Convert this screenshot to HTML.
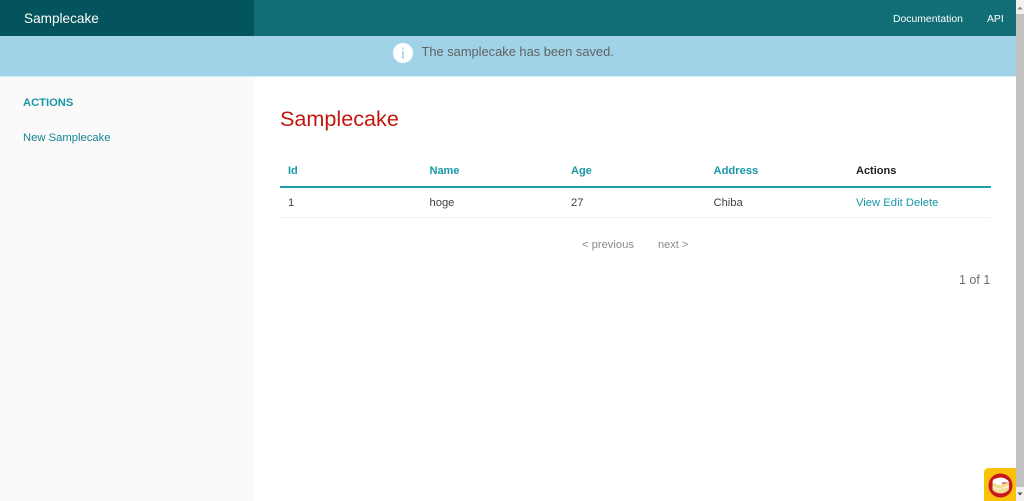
<!DOCTYPE html>
<html>
<head>
<meta charset="utf-8">
<style>
html,body{margin:0;padding:0;width:1024px;height:501px;overflow:hidden;background:#fff;font-family:"Liberation Sans",sans-serif}
.a{position:absolute;white-space:nowrap;line-height:1;filter:blur(.25px)}
.b{position:absolute}
</style>
</head>
<body>
<div class="b" style="left:0;top:0;width:1016px;height:36px;background:#116d76"></div>
<div class="b" style="left:0;top:0;width:254px;height:36px;background:#03545c"></div>
<div class="a" style="left:24px;top:12px;font-size:13.6px;color:#fff">Samplecake</div>
<div class="a" style="left:893px;top:14.5px;font-size:10.4px;color:#fff">Documentation</div>
<div class="a" style="left:987px;top:14.5px;font-size:10.4px;color:#fff">API</div>

<div class="b" style="left:0;top:36px;width:1016px;height:40px;background:#a0d3e8"></div>
<div class="b" style="left:0;top:76px;width:1016px;height:1px;background:#d4ecf5"></div>
<svg class="b" style="left:393px;top:43px" width="20" height="20" viewBox="0 0 20 20">
<circle cx="10" cy="10" r="10" fill="#fff"/>
<rect x="9.2" y="4.5" width="1.6" height="1.8" fill="#a0d3e8"/>
<rect x="9.2" y="8" width="1.6" height="8" fill="#a0d3e8"/>
</svg>
<div class="a" style="left:421.5px;top:46px;font-size:12.87px;color:#626262">The samplecake has been saved.</div>

<div class="b" style="left:0;top:77px;width:254px;height:424px;background:#fafafa"></div>
<div class="a" style="left:23px;top:97.500px;font-size:11.2px;font-weight:bold;color:#1798a5">ACTIONS</div>
<div class="a" style="left:23px;top:132.500px;font-size:11.25px;color:#15848f">New Samplecake</div>

<div class="a" style="left:280px;top:108px;font-size:21.6px;color:#c3170d">Samplecake</div>

<div class="a" style="left:288px;top:166px;font-size:11px;font-weight:bold;color:#1798a5">Id</div>
<div class="a" style="left:429.5px;top:166px;font-size:11px;font-weight:bold;color:#1798a5">Name</div>
<div class="a" style="left:571px;top:166px;font-size:11px;font-weight:bold;color:#1798a5">Age</div>
<div class="a" style="left:713.5px;top:166px;font-size:11.2px;font-weight:bold;color:#1798a5">Address</div>
<div class="a" style="left:856px;top:166px;font-size:11px;font-weight:bold;color:#222">Actions</div>
<div class="b" style="left:280px;top:186px;width:711px;height:2px;background:#1d9fab"></div>

<div class="a" style="left:288px;top:197.500px;font-size:11.2px;color:#404040">1</div>
<div class="a" style="left:429.5px;top:197.500px;font-size:11.2px;color:#404040">hoge</div>
<div class="a" style="left:571px;top:197.500px;font-size:11.2px;color:#404040">27</div>
<div class="a" style="left:713.5px;top:197.500px;font-size:11.2px;color:#404040">Chiba</div>
<div class="a" style="left:856px;top:197.500px;font-size:11.25px;color:#1798a5">View Edit Delete</div>
<div class="b" style="left:280px;top:217px;width:711px;height:1px;background:#f0f0f0"></div>

<div class="a" style="left:582px;top:239.500px;font-size:11.2px;color:#8a8a8a">&lt; previous</div>
<div class="a" style="left:658px;top:239.500px;font-size:11px;color:#8a8a8a">next &gt;</div>
<div class="a" style="left:959px;top:274px;font-size:12.5px;color:#6f6f6f">1 of 1</div>

<div class="b" style="left:1016px;top:0;width:8px;height:501px;background:#c2c2c2"></div>
<div class="b" style="left:1016px;top:0;width:8px;height:14px;background:#f1f1f1"></div>
<div class="b" style="left:1016px;top:487px;width:8px;height:14px;background:#f1f1f1"></div>
<svg class="b" style="left:1016px;top:0" width="8" height="14"><path d="M1.5 9.5L4 6.5L6.5 9.5Z" fill="#8a8a8a"/></svg>
<svg class="b" style="left:1016px;top:487px" width="8" height="14"><path d="M1.5 5.5L4 8.5L6.5 5.5Z" fill="#505050"/></svg>

<svg class="b" style="left:984px;top:468px" width="32" height="33" viewBox="0 0 32 33">
<path d="M5 0H32V33H0V5Q0 0 5 0Z" fill="#fbc20c"/>
<circle cx="16.5" cy="17.5" r="12" fill="#c8171e"/>
<path d="M8.500 14V22Q11.500 25.500 17 25.500Q22.500 25 25 21.500V14.500L18 16Z" fill="#f0de96"/>
<path d="M8.500 18Q12.500 20.500 17 20.500V22Q12.500 22 8.500 20ZM19 19.500L25 17.500V19L19 21Z" fill="#fbf4cc"/>
<path d="M8.500 14Q8.500 11 12 10.500Q17 8.500 21 10.500Q24.500 12 25 14.500L18.500 14.500L18 17Q12 17 8.500 14Z" fill="#fff"/>
</svg>
</body>
</html>
